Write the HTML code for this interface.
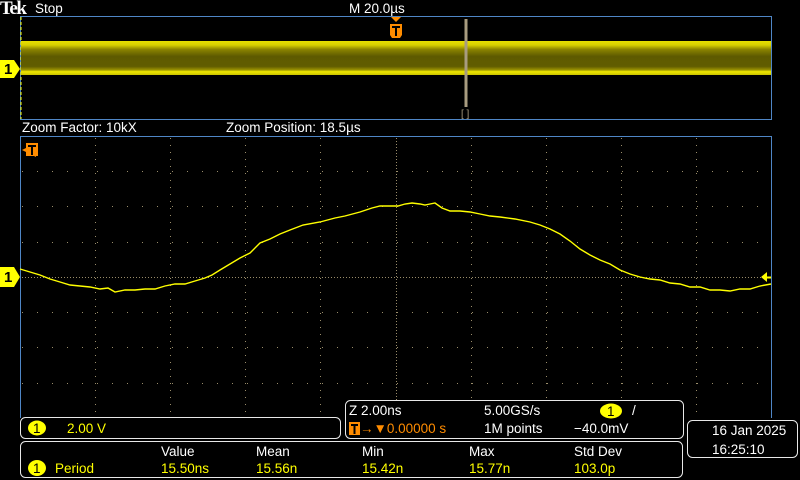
<!DOCTYPE html>
<html><head><meta charset="utf-8"><style>
html,body{margin:0;padding:0;background:#000;width:800px;height:480px;overflow:hidden}
svg{display:block}
text{font-family:"Liberation Sans Narrow","Liberation Sans",sans-serif;font-size:13.5px;fill:#fff}
.y{fill:#ffff00}.o{fill:#ff8c00}
</style></head><body>
<svg width="800" height="480" viewBox="0 0 800 480" xmlns="http://www.w3.org/2000/svg">
<defs>
<linearGradient id="band" x1="0" y1="0" x2="0" y2="1">
<stop offset="0" stop-color="#e8e000"/><stop offset="0.12" stop-color="#d8d000"/><stop offset="0.25" stop-color="#8a8300"/><stop offset="0.45" stop-color="#5e5a00"/><stop offset="0.75" stop-color="#615d00"/><stop offset="0.85" stop-color="#9a9200"/><stop offset="0.9" stop-color="#f0e800"/><stop offset="1" stop-color="#c8c000"/>
</linearGradient>
</defs>
<text x="0" y="14" style="font-family:'Liberation Serif',serif;font-weight:bold;font-size:19px;letter-spacing:-1.5px">Tek</text>
<text x="35" y="13">Stop</text>
<text x="349" y="13">M 20.0µs</text>
<rect x="20.5" y="16.5" width="751" height="103" fill="none" stroke="#4f86c6"/>
<line x1="21" y1="17" x2="21" y2="119" stroke="#ffff00" stroke-dasharray="3,2"/>
<rect x="21" y="41" width="750" height="34" fill="url(#band)"/>
<rect x="464.5" y="19" width="3" height="88" fill="#a89c80"/>
<text x="461" y="117" style="font-size:10px;fill:#a89c80">[ ]</text>
<polygon points="391,17 401,17 396,22" fill="#ff8c00"/>
<path d="M390,24 h12 v11 l-2,3 h-8 l-2,-3 z" fill="#ff8c00"/>
<path d="M392,26 h8 v2 h-3 v8 h-2 v-8 h-3 z" fill="#000"/>
<path d="M0,60 h14 l6,9 l-6,9 h-14 z" fill="#ffff00"/>
<text x="4" y="74" style="fill:#000;font-weight:bold;font-size:15px">1</text>
<text x="22" y="132">Zoom Factor: 10kX</text>
<text x="226" y="132">Zoom Position: 18.5µs</text>
<line x1="20.5" y1="136" x2="20.5" y2="418" stroke="#4f86c6"/>
<line x1="20" y1="136.5" x2="772" y2="136.5" stroke="#4f86c6"/>
<line x1="771.5" y1="136" x2="771.5" y2="418" stroke="#4f86c6"/>
<g stroke="#9a8d6a" stroke-width="1">
<g stroke-dasharray="1,6">
<line x1="95.5" y1="138" x2="95.5" y2="418"/><line x1="170.5" y1="138" x2="170.5" y2="418"/><line x1="245.5" y1="138" x2="245.5" y2="418"/><line x1="320.5" y1="138" x2="320.5" y2="418"/><line x1="471.5" y1="138" x2="471.5" y2="418"/><line x1="546.5" y1="138" x2="546.5" y2="418"/><line x1="621.5" y1="138" x2="621.5" y2="418"/><line x1="696.5" y1="138" x2="696.5" y2="418"/>
</g>
<g stroke-dasharray="1,14">
<line x1="22" y1="171.5" x2="771" y2="171.5"/><line x1="22" y1="206.5" x2="771" y2="206.5"/><line x1="22" y1="242.5" x2="771" y2="242.5"/><line x1="22" y1="312.5" x2="771" y2="312.5"/><line x1="22" y1="347.5" x2="771" y2="347.5"/><line x1="22" y1="383.5" x2="771" y2="383.5"/>
</g>
<g stroke-dasharray="1,2">
<line x1="22" y1="277.5" x2="771" y2="277.5"/><line x1="396.5" y1="138" x2="396.5" y2="418"/>
</g>
</g>
<polygon points="36,143 22,150 36,157" fill="#ff8c00"/>
<path d="M26,143 h12 v13 h-12 z" fill="#ff8c00"/>
<path d="M28,145 h8 v2 h-3 v8 h-2 v-8 h-3 z" fill="#000"/>
<path d="M0,267 h14 l6,10 l-6,10 h-14 z" fill="#ffff00"/>
<text x="4" y="282" style="fill:#000;font-weight:bold;font-size:15px">1</text>
<polygon points="761,277 767,272 767,282" fill="#ffff00"/>
<line x1="766" y1="277.5" x2="771" y2="277.5" stroke="#ffff00" stroke-width="2"/>
<polyline fill="none" stroke="#ffff00" stroke-width="1.4" points="20,269 30,272 40,275 50,279 60,282 70,285 80,286 90,287 100,289 108,288 115,292 125,290 135,290 145,289 155,289 165,286 175,284 185,284 195,281 205,278 212,275 220,270 230,264 240,258 250,253 260,243 270,239 280,234 290,230 303,225 320,222 335,218 345,216 360,212 372,208 380,206 393,206 398,206 405,204 412,203 420,204 425,205 430,204 435,203 442,208 450,211 460,211 470,212 480,214 490,216 500,217 515,219 530,222 540,225 550,229 560,234 570,241 580,249 590,255 600,260 610,264 620,270 630,274 640,277 650,279 660,280 670,283 680,284 690,287 700,287 710,290 720,290 730,291 740,289 750,289 760,286 771,284"/>
<rect x="20.5" y="417.5" width="320" height="21" rx="5" fill="#000" stroke="#e8e8e8"/>
<ellipse cx="37" cy="428" rx="9" ry="7.5" fill="#ffff00"/>
<text x="33" y="433" style="fill:#000">1</text>
<text x="67" y="433" class="y">2.00 V</text>
<rect x="345.5" y="400.5" width="338" height="38" rx="5" fill="#000" stroke="#e8e8e8"/>
<text x="349" y="415">Z 2.00ns</text>
<text x="484" y="415">5.00GS/s</text>
<ellipse cx="611" cy="411" rx="11" ry="7.5" fill="#ffff00"/>
<text x="607" y="416" style="fill:#000">1</text>
<text x="632" y="415">/</text>
<rect x="349" y="422" width="11" height="13" fill="#ff8c00"/>
<path d="M351,424 h7 v2 h-2.5 v8 h-2 v-8 h-2.5 z" fill="#000"/>
<text x="360" y="433" class="o">→▼0.00000 s</text>
<text x="484" y="433">1M points</text>
<text x="574" y="433">−40.0mV</text>
<rect x="687.5" y="420.5" width="110" height="37" rx="5" fill="#000" stroke="#e8e8e8"/>
<text x="712" y="435">16 Jan  2025</text>
<text x="712" y="454">16:25:10</text>
<rect x="20.5" y="441.5" width="662" height="36" rx="5" fill="#000" stroke="#e8e8e8"/>
<text x="161" y="456">Value</text><text x="256" y="456">Mean</text><text x="362" y="456">Min</text><text x="469" y="456">Max</text><text x="574" y="456">Std Dev</text>
<ellipse cx="37" cy="468" rx="9" ry="8" fill="#ffff00"/>
<text x="33" y="473" style="fill:#000">1</text>
<text x="55" y="473" class="y">Period</text>
<text x="161" y="473" class="y">15.50ns</text><text x="256" y="473" class="y">15.56n</text><text x="362" y="473" class="y">15.42n</text><text x="469" y="473" class="y">15.77n</text><text x="574" y="473" class="y">103.0p</text>
</svg>
</body></html>
